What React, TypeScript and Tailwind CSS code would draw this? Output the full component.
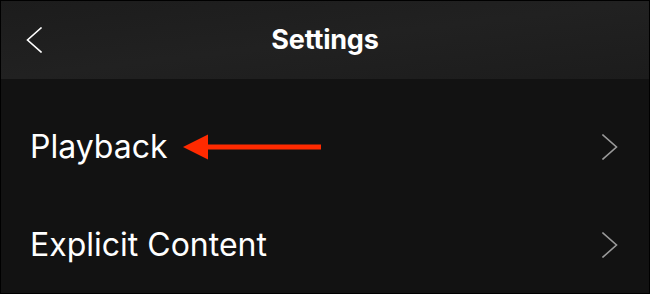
import React from 'react';

const Chevron: React.FC<{ dir: 'left' | 'right'; className?: string }> = ({ dir, className }) => (
  <svg width="16" height="26" viewBox="0 0 16 26" fill="none" className={className}>
    <path
      d={dir === 'left' ? 'M15 1 L1.5 13 L15 25' : 'M1 1 L14.5 13 L1 25'}
      stroke="currentColor"
      strokeWidth="1.6"
      strokeLinecap="square"
    />
  </svg>
);

const Arrow: React.FC = () => (
  <svg width="140" height="26" viewBox="0 0 140 26" className="ml-[15px] shrink-0">
    <polygon points="0,13 25,0.5 25,25.5" fill="#ff2a00" />
    <rect x="24" y="10.5" width="114" height="5" fill="#ff2a00" />
  </svg>
);

const App: React.FC = () => {
  const rows = ['Playback', 'Explicit Content'];

  return (
    <div className="w-[650px] h-[294px] border border-black bg-[#121212] overflow-hidden font-['Inter',sans-serif]">
      {/* Header */}
      <div className="h-[78px] bg-gradient-to-br from-[#1c1c1c] via-[#212121] to-[#1c1c1c] flex items-center relative">
        <Chevron dir="left" className="text-white ml-[25px]" />
        <h1 className="absolute left-0 right-0 text-center text-[27px] font-bold text-white tracking-[-0.2px] pointer-events-none">
          Settings
        </h1>
      </div>

      {/* List */}
      <div className="pt-[19px]">
        {rows.map((label, idx) => (
          <div key={idx} className="h-[98px] flex items-center justify-between pl-[29px] pr-[31px]">
            <div className="flex items-center">
              <span className="text-[32px] text-white">{label}</span>
              {idx === 0 && <Arrow />}
            </div>
            <Chevron dir="right" className="text-[#9a9a9a]" />
          </div>
        ))}
      </div>
    </div>
  );
};

export default App;
